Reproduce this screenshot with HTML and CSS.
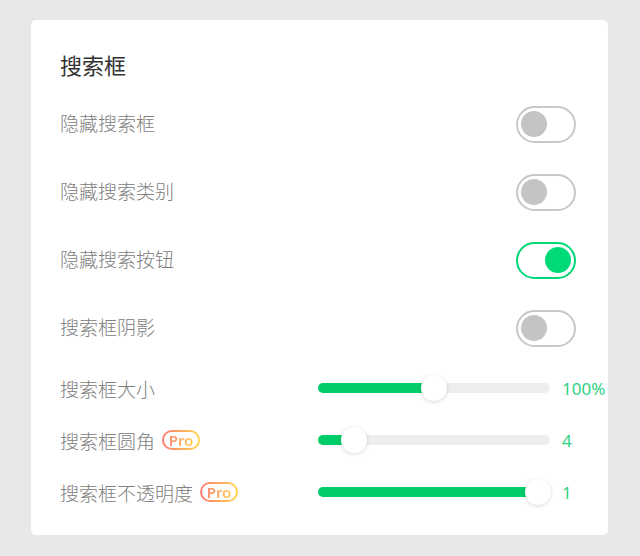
FILE: index.html
```html
<!DOCTYPE html>
<html lang="zh-CN">

<head>
    <meta charset="UTF-8">
    <meta name="viewport" content="width=device-width, initial-scale=1.0">
    <title>搜索框</title>
    <link rel="stylesheet" href="styles.css">
</head>

<body>
    <div class="card">
        <div class="card-title">搜索框</div>

        <div class="row">
            <span class="label">隐藏搜索框</span>
            <span class="switch"><span class="knob"></span></span>
        </div>
        <div class="row">
            <span class="label">隐藏搜索类别</span>
            <span class="switch"><span class="knob"></span></span>
        </div>
        <div class="row">
            <span class="label">隐藏搜索按钮</span>
            <span class="switch on"><span class="knob"></span></span>
        </div>
        <div class="row">
            <span class="label">搜索框阴影</span>
            <span class="switch"><span class="knob"></span></span>
        </div>

        <div class="slider-row">
            <span class="label">搜索框大小</span>
            <div class="track">
                <div class="fill" style="width: 116px"></div>
                <div class="thumb" style="left: 103px"></div>
            </div>
            <span class="value">100%</span>
        </div>
        <div class="slider-row">
            <span class="label">搜索框圆角<span class="pro"><span class="pro-text">Pro</span></span></span>
            <div class="track">
                <div class="fill" style="width: 36px"></div>
                <div class="thumb" style="left: 23px"></div>
            </div>
            <span class="value">4</span>
        </div>
        <div class="slider-row">
            <span class="label">搜索框不透明度<span class="pro"><span class="pro-text">Pro</span></span></span>
            <div class="track">
                <div class="fill" style="width: 220px"></div>
                <div class="thumb" style="left: 207px"></div>
            </div>
            <span class="value">1</span>
        </div>
    </div>
</body>

</html>
```

FILE: styles.css
```css
body {
    margin: 0;
    background-color: #e8e8e8;
    font-family: "Noto Sans CJK SC", "Noto Sans", sans-serif;
}

.card {
    margin: 20px 0 0 31px;
    width: 577px;
    height: 515px;
    box-sizing: border-box;
    padding: 30px 32px 0 29px;
    background-color: #fff;
    border-radius: 5px;
}

.card-title {
    font-size: 22px;
    line-height: 28px;
    color: #333;
    margin-bottom: 12px;
}

.row {
    display: flex;
    align-items: center;
    justify-content: space-between;
    height: 68px;
}

.row .label {
    margin-top: -3px;
}

.label {
    display: flex;
    align-items: center;
    font-size: 19px;
    font-weight: 300;
    color: #808080;
    white-space: nowrap;
}

.switch {
    display: flex;
    align-items: center;
    width: 60px;
    height: 37px;
    box-sizing: border-box;
    border: 2.5px solid #c8c8c8;
    border-radius: 20px;
    padding: 0 3px;
}

.knob {
    width: 26px;
    height: 26px;
    border-radius: 50%;
    background-color: #c4c4c4;
}

.switch.on {
    border-color: #00d977;
    justify-content: flex-end;
}

.switch.on .knob {
    background-color: #00d977;
}

.slider-row {
    display: flex;
    align-items: center;
    height: 52px;
}

.slider-row .label {
    flex: 1;
}

.pro {
    display: inline-block;
    margin-left: 7px;
    height: 20px;
    width: 38px;
    box-sizing: border-box;
    border: 2px solid transparent;
    border-radius: 10px;
    background: linear-gradient(#fff, #fff) padding-box,
        linear-gradient(90deg, #ff7a73, #ffd84e) border-box;
    text-align: center;
}

.pro-text {
    display: block;
    font-family: "Noto Sans", sans-serif;
    font-size: 15px;
    font-weight: 600;
    line-height: 16px;
    background: linear-gradient(90deg, #ff7a73, #ffd84e);
    -webkit-background-clip: text;
    background-clip: text;
    color: transparent;
}

.track {
    position: relative;
    width: 232px;
    height: 10px;
    border-radius: 5px;
    background-color: #eeeeee;
}

.fill {
    height: 10px;
    border-radius: 5px;
    background-color: #00cc6a;
}

.thumb {
    position: absolute;
    top: -8px;
    width: 26px;
    height: 26px;
    border-radius: 50%;
    background-color: #fff;
    box-shadow: 0 1px 4px rgba(0, 0, 0, 0.15);
}

.value {
    width: 14px;
    margin-left: 12px;
    font-family: "Noto Sans", sans-serif;
    font-size: 17px;
    color: #2fd27f;
    white-space: nowrap;
}
```
